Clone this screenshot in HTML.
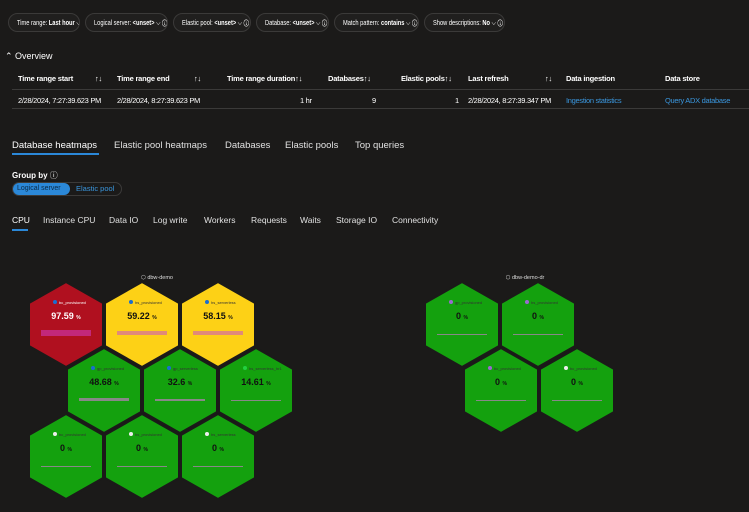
<!DOCTYPE html>
<html><head><meta charset="utf-8"><style>
*{margin:0;padding:0;box-sizing:border-box}
body{width:749px;height:512px;background:#1b1a19;color:#fff;font-family:"Liberation Sans",sans-serif;font-size:8px;position:relative;overflow:hidden}
.a{position:absolute;white-space:nowrap}
.pill{position:absolute;top:13px;height:19px;border:1px solid #3b3a39;border-radius:10px;background:#201f1e;font-size:7.5px;line-height:17px;padding-left:8px;color:#fff;white-space:nowrap;overflow:hidden}
.pill span{display:inline-block;transform:scaleX(0.76);transform-origin:left center}
.pill b{font-weight:bold}
.th{position:absolute;top:74px;font-size:7.5px;font-weight:bold;white-space:nowrap;letter-spacing:-0.2px}
.td{position:absolute;top:96px;font-size:7.5px;white-space:nowrap;letter-spacing:-0.3px}
.lnk{color:#3a96dd}
.line{position:absolute;left:12px;right:0;height:1px;background:#3b3a39}
.tab{position:absolute;top:140px;font-size:9.5px;color:#e0e0e0;white-space:nowrap}
.mt{position:absolute;top:215px;font-size:8.5px;color:#e0e0e0;white-space:nowrap}
</style></head><body>
<div class="pill" style="left:8px;width:72px"><span>Time range: <b>Last hour</b> ⌵</span></div>
<div class="pill" style="left:85px;width:83px"><span>Logical server: <b>&lt;unset&gt;</b> ⌵ ⓘ</span></div>
<div class="pill" style="left:173px;width:78px"><span>Elastic pool: <b>&lt;unset&gt;</b> ⌵ ⓘ</span></div>
<div class="pill" style="left:256px;width:73px"><span>Database: <b>&lt;unset&gt;</b> ⌵ ⓘ</span></div>
<div class="pill" style="left:334px;width:85px"><span>Match pattern: <b>contains</b> ⌵ ⓘ</span></div>
<div class="pill" style="left:424px;width:81px"><span>Show descriptions: <b>No</b> ⌵ ⓘ</span></div>

<div class="a" style="left:5px;top:51px;font-size:9px">⌃ <span>Overview</span></div>
<div class="th" style="left:18px">Time range start</div><div class="th" style="left:95px">↑↓</div>
<div class="th" style="left:117px">Time range end</div><div class="th" style="left:194px">↑↓</div>
<div class="th" style="left:227px">Time range duration↑↓</div>
<div class="th" style="left:328px">Databases↑↓</div>
<div class="th" style="left:401px">Elastic pools↑↓</div>
<div class="th" style="left:468px">Last refresh</div><div class="th" style="left:545px">↑↓</div>
<div class="th" style="left:566px">Data ingestion</div>
<div class="th" style="left:665px">Data store</div>
<div class="line" style="top:89px"></div>
<div class="td" style="left:18px">2/28/2024, 7:27:39.623 PM</div>
<div class="td" style="left:117px">2/28/2024, 8:27:39.623 PM</div>
<div class="td" style="left:300px">1 hr</div>
<div class="td" style="left:372px">9</div>
<div class="td" style="left:455px">1</div>
<div class="td" style="left:468px">2/28/2024, 8:27:39.347 PM</div>
<div class="td lnk" style="left:566px">Ingestion statistics</div>
<div class="td lnk" style="left:665px">Query ADX database</div>
<div class="line" style="top:108px"></div>

<div class="tab" style="left:12px;color:#fff">Database heatmaps</div>
<div class="a" style="left:12px;top:153px;width:87px;height:2px;background:#2b88d8"></div>
<div class="tab" style="left:114px">Elastic pool heatmaps</div>
<div class="tab" style="left:225px">Databases</div>
<div class="tab" style="left:285px">Elastic pools</div>
<div class="tab" style="left:355px">Top queries</div>

<div class="a" style="left:12px;top:170px;font-size:8px;font-weight:bold">Group by <span style="font-weight:normal">ⓘ</span></div>
<div class="a" style="left:12px;top:182px;width:110px;height:14px;border:1px solid #3b3a39;border-radius:7px"></div>
<div class="a" style="left:13px;top:183px;width:57px;height:12px;background:#2b88d8;border-radius:6px;color:#0b2a45;font-size:7px;line-height:12px;padding-left:4px">Logical server</div>
<div class="a" style="left:76px;top:183px;font-size:7.5px;line-height:12px;color:#3a96dd">Elastic pool</div>

<div class="mt" style="left:12px;color:#fff">CPU</div>
<div class="a" style="left:12px;top:229px;width:16px;height:2px;background:#2b88d8"></div>
<div class="mt" style="left:43px">Instance CPU</div>
<div class="mt" style="left:109px">Data IO</div>
<div class="mt" style="left:153px">Log write</div>
<div class="mt" style="left:204px">Workers</div>
<div class="mt" style="left:251px">Requests</div>
<div class="mt" style="left:300px">Waits</div>
<div class="mt" style="left:336px">Storage IO</div>
<div class="mt" style="left:392px">Connectivity</div>

<svg class="a" style="left:0;top:0" width="749" height="512" font-family="Liberation Sans, sans-serif">
<defs><polygon id="h" points="37,0 74,21 74,64 37,85 0,64 0,21" stroke="#1b1a19" stroke-width="2"/></defs>
<text x="157" y="279" font-size="5.5" fill="#ddd" text-anchor="middle">⬡ dbw-demo</text>
<text x="525" y="279" font-size="5.5" fill="#ddd" text-anchor="middle">⬡ dbw-demo-dr</text>
<g transform="translate(29,282)"><use href="#h" fill="#b0101f"/><circle cx="26" cy="20" r="2" fill="#1a6ed0"/><text x="30" y="22" font-size="4" fill="#fff">bc_provisioned</text><text x="37" y="37" font-size="9" font-weight="bold" fill="#fff" text-anchor="middle">97.59 <tspan font-size="5">%</tspan></text><rect x="12" y="48" width="50" height="6" fill="#c2287a"/></g>
<g transform="translate(105,282)"><use href="#h" fill="#fdd116"/><circle cx="26" cy="20" r="2" fill="#1a6ed0"/><text x="30" y="22" font-size="4" fill="#333">hs_provisioned</text><text x="37" y="37" font-size="9" font-weight="bold" fill="#111" text-anchor="middle">59.22 <tspan font-size="5">%</tspan></text><rect x="12" y="49" width="50" height="4" fill="#e08a7a"/></g>
<g transform="translate(181,282)"><use href="#h" fill="#fdd116"/><circle cx="26" cy="20" r="2" fill="#1a6ed0"/><text x="30" y="22" font-size="4" fill="#333">hs_serverless</text><text x="37" y="37" font-size="9" font-weight="bold" fill="#111" text-anchor="middle">58.15 <tspan font-size="5">%</tspan></text><rect x="12" y="49" width="50" height="4" fill="#e08a7a"/></g>
<g transform="translate(67,348)"><use href="#h" fill="#14a10e"/><circle cx="26" cy="20" r="2" fill="#1a6ed0"/><text x="30" y="22" font-size="4" fill="#333">gp_provisioned</text><text x="37" y="37" font-size="9" font-weight="bold" fill="#111" text-anchor="middle">48.68 <tspan font-size="5">%</tspan></text><rect x="12" y="50" width="50" height="3" fill="#888"/></g>
<g transform="translate(143,348)"><use href="#h" fill="#14a10e"/><circle cx="26" cy="20" r="2" fill="#1a6ed0"/><text x="30" y="22" font-size="4" fill="#333">gp_serverless</text><text x="37" y="37" font-size="9" font-weight="bold" fill="#111" text-anchor="middle">32.6 <tspan font-size="5">%</tspan></text><rect x="12" y="51" width="50" height="2" fill="#888"/></g>
<g transform="translate(219,348)"><use href="#h" fill="#14a10e"/><circle cx="26" cy="20" r="2" fill="#22d040"/><text x="30" y="22" font-size="4" fill="#333">hs_serverless_hr1</text><text x="37" y="37" font-size="9" font-weight="bold" fill="#111" text-anchor="middle">14.61 <tspan font-size="5">%</tspan></text><rect x="12" y="52" width="50" height="1" fill="#888"/></g>
<g transform="translate(29,414)"><use href="#h" fill="#14a10e"/><circle cx="26" cy="20" r="2" fill="#eee"/><text x="30" y="22" font-size="4" fill="#333">bc_provisioned</text><text x="37" y="37" font-size="9" font-weight="bold" fill="#111" text-anchor="middle">0 <tspan font-size="5">%</tspan></text><rect x="12" y="52" width="50" height="1" fill="#888"/></g>
<g transform="translate(105,414)"><use href="#h" fill="#14a10e"/><circle cx="26" cy="20" r="2" fill="#eee"/><text x="30" y="22" font-size="4" fill="#333">hs_provisioned</text><text x="37" y="37" font-size="9" font-weight="bold" fill="#111" text-anchor="middle">0 <tspan font-size="5">%</tspan></text><rect x="12" y="52" width="50" height="1" fill="#888"/></g>
<g transform="translate(181,414)"><use href="#h" fill="#14a10e"/><circle cx="26" cy="20" r="2" fill="#eee"/><text x="30" y="22" font-size="4" fill="#333">hs_serverless</text><text x="37" y="37" font-size="9" font-weight="bold" fill="#111" text-anchor="middle">0 <tspan font-size="5">%</tspan></text><rect x="12" y="52" width="50" height="1" fill="#888"/></g>
<g transform="translate(425,282)"><use href="#h" fill="#14a10e"/><circle cx="26" cy="20" r="2" fill="#9a6ad0"/><text x="30" y="22" font-size="4" fill="#333">gp_provisioned</text><text x="37" y="37" font-size="9" font-weight="bold" fill="#111" text-anchor="middle">0 <tspan font-size="5">%</tspan></text><rect x="12" y="52" width="50" height="1" fill="#888"/></g>
<g transform="translate(501,282)"><use href="#h" fill="#14a10e"/><circle cx="26" cy="20" r="2" fill="#9a6ad0"/><text x="30" y="22" font-size="4" fill="#333">hs_provisioned</text><text x="37" y="37" font-size="9" font-weight="bold" fill="#111" text-anchor="middle">0 <tspan font-size="5">%</tspan></text><rect x="12" y="52" width="50" height="1" fill="#888"/></g>
<g transform="translate(464,348)"><use href="#h" fill="#14a10e"/><circle cx="26" cy="20" r="2" fill="#9a6ad0"/><text x="30" y="22" font-size="4" fill="#333">bc_provisioned</text><text x="37" y="37" font-size="9" font-weight="bold" fill="#111" text-anchor="middle">0 <tspan font-size="5">%</tspan></text><rect x="12" y="52" width="50" height="1" fill="#888"/></g>
<g transform="translate(540,348)"><use href="#h" fill="#14a10e"/><circle cx="26" cy="20" r="2" fill="#eee"/><text x="30" y="22" font-size="4" fill="#333">bc_provisioned</text><text x="37" y="37" font-size="9" font-weight="bold" fill="#111" text-anchor="middle">0 <tspan font-size="5">%</tspan></text><rect x="12" y="52" width="50" height="1" fill="#888"/></g>
</svg>
</body></html>
